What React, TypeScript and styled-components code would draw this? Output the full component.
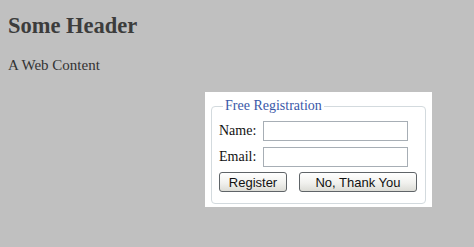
import React from "react";
import styled, { createGlobalStyle } from "styled-components";

const GlobalStyle = createGlobalStyle`
  html, body {
    margin: 0;
    padding: 0;
    background: #c0c0c0;
  }
  body {
    padding: 0 8px;
    font-family: "Liberation Serif", "Times New Roman", serif;
    color: #333;
  }
`;

const Header = styled.h2`
  margin: 13px 0 0;
  font-size: 22.5px;
  font-weight: bold;
  line-height: normal;
  color: #3c3c3c;
`;

const Content = styled.p`
  margin: 18px 0 0;
  font-size: 15px;
  line-height: normal;
  color: #333;
`;

const Panel = styled.div`
  margin: 18px 0 0 197px;
  width: 227px;
  box-sizing: border-box;
  background: #fff;
  padding: 6px 6px 3px 6px;
`;

const Fieldset = styled.fieldset`
  margin: 0;
  border: 1px solid #d3dade;
  border-radius: 4px;
  padding: 0 8px 11px 7px;
`;

const Legend = styled.legend`
  margin-left: 4px;
  padding: 0 2px;
  font-size: 14px;
  color: #3a58a8;
`;

const Fields = styled.div`
  display: grid;
  grid-template-columns: 44px 145px;
  row-gap: 6px;
  align-items: center;
  margin-top: 7px;
`;

const Label = styled.label`
  font-size: 14px;
  color: #111;
`;

const Input = styled.input`
  box-sizing: border-box;
  height: 20px;
  width: 145px;
  margin: 0;
  border: 1px solid #a7aeb5;
  background: #fff;
`;

const Buttons = styled.div`
  display: flex;
  gap: 12px;
  margin-top: 5px;
`;

const Button = styled.button<{ w: number }>`
  box-sizing: border-box;
  width: ${(p) => p.w}px;
  height: 20px;
  padding: 0;
  border: 1px solid #5f6468;
  border-radius: 3px;
  background: linear-gradient(#ffffff, #f1f1ee 55%, #dcdcd6);
  font-family: "Liberation Sans", Arial, sans-serif;
  font-size: 13px;
  color: #111;
`;

export default function App() {
  return (
    <>
      <GlobalStyle />
      <Header>Some Header</Header>
      <Content>A Web Content</Content>
      <Panel>
        <Fieldset>
          <Legend>Free Registration</Legend>
          <Fields>
            <Label>Name:</Label>
            <Input type="text" />
            <Label>Email:</Label>
            <Input type="text" />
          </Fields>
          <Buttons>
            <Button w={68}>Register</Button>
            <Button w={118}>No, Thank You</Button>
          </Buttons>
        </Fieldset>
      </Panel>
    </>
  );
}
